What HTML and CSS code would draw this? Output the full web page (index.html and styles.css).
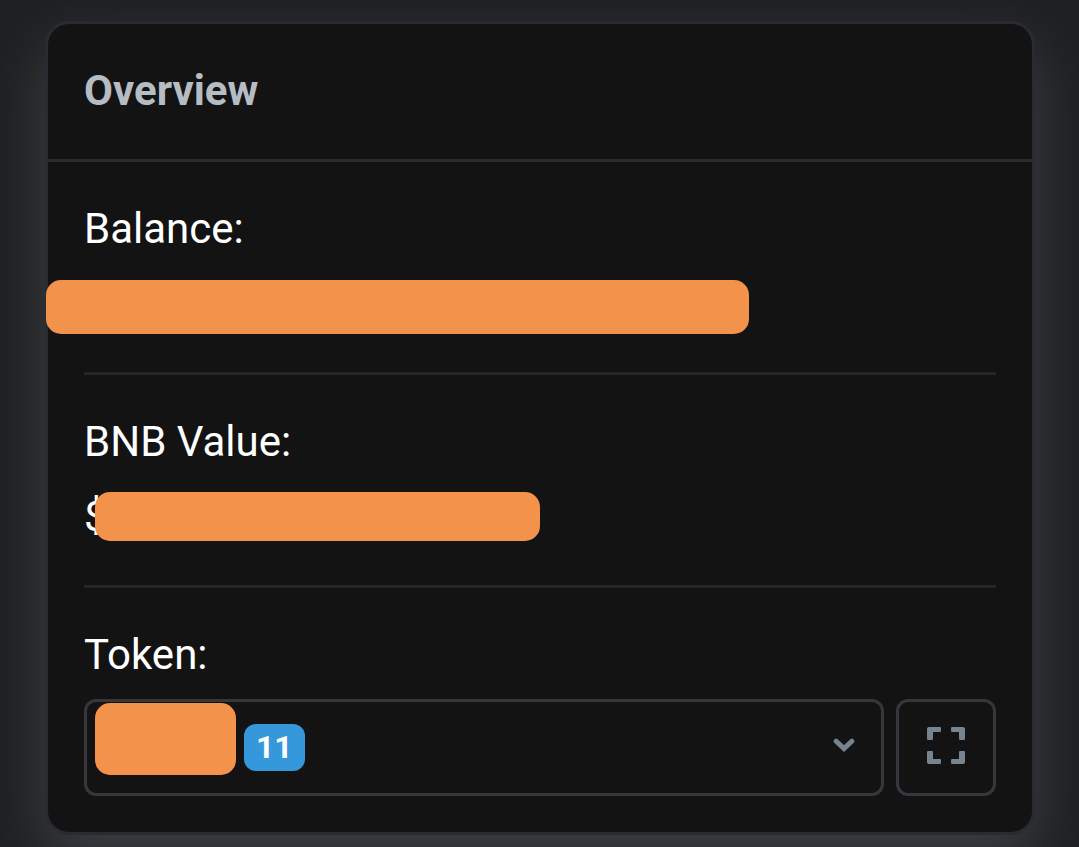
FILE: index.html
```html
<!DOCTYPE html>
<html lang="en">
<head>
    <meta charset="UTF-8">
    <meta name="viewport" content="width=device-width, initial-scale=1.0">
    <title>Overview</title>
    <link rel="stylesheet" href="styles.css">
</head>
<body>
    <main class="card">
        <div class="card-header">
            <h2>Overview</h2>
        </div>

        <div class="card-body">
            <div class="row">
                <div class="label">Balance:</div>
                <div class="value"><span class="mask mask-balance"></span></div>
            </div>
            <hr>
            <div class="row">
                <div class="label">BNB Value:</div>
                <div class="value">$<span class="mask mask-usd"></span></div>
            </div>
            <hr>
            <div class="row">
                <label class="label" for="token">Token:</label>
                <div class="token-bar">
                    <div class="token-select">
                        <select id="token">
                            <option value=""></option>
                        </select>
                        <div class="token-info">
                            <span class="mask-token"></span>
                            <span class="badge">11</span>
                        </div>
                        <svg class="arrow" width="22" height="14" viewBox="0 0 22 14" fill="none" stroke="currentColor" stroke-width="5">
                            <path d="M3.2 3.2 11 10.6 18.8 3.2" stroke-linecap="round"/>
                        </svg>
                    </div>
                    <button type="button" class="expand" aria-label="View tokens">
                        <svg width="38" height="37" viewBox="0 0 38 37" fill="currentColor">
                            <path d="M2 0H13Q14 0 14 1V4Q14 5 13 5H6V12Q6 13 5 13H1Q0 13 0 12V2Q0 0 2 0Z"/>
                            <path d="M36 0H25Q24 0 24 1V4Q24 5 25 5H32V12Q32 13 33 13H37Q38 13 38 12V2Q38 0 36 0Z"/>
                            <path d="M2 37H13Q14 37 14 36V33Q14 32 13 32H6V25Q6 24 5 24H1Q0 24 0 25V35Q0 37 2 37Z"/>
                            <path d="M36 37H25Q24 37 24 36V33Q24 32 25 32H32V25Q32 24 33 24H37Q38 24 38 25V35Q38 37 36 37Z"/>
                        </svg>
                    </button>
                </div>
            </div>
        </div>
    </main>
</body>
</html>
```
FILE: styles.css
```css
*{
    box-sizing: border-box;
}
body{
    margin: 0;
    padding: 21px 44px 12px 45px;
    min-height: 100vh;
    background: #1f2022;
    color: #fff;
    font-family: Roboto, sans-serif;
    font-size: 42px;
    line-height: 61px;
}
.card{
    background: #131313;
    border: 3px solid #282b31;
    border-radius: 24px;
    box-shadow: 0 24px 58px #3e3f43;
}
.card-header{
    padding: 36px 36px 38px;
    border-bottom: 3px solid #2a2c31;
}
h2{
    margin: 0;
    font-size: 42px;
    font-weight: 700;
    color: #b5bcc4;
}
.card-body{
    padding: 36px;
}
hr{
    margin: 36px 0;
    border: none;
    border-top: 3px solid #25262a;
}
.row{
    display: flex;
    flex-direction: column;
    gap: 12px;
}
.label{
    padding-bottom: 2px;
}
.value{
    position: relative;
    height: 63px;
}

/* blocks that hide the private amounts */
.mask{
    position: absolute;
    border-radius: 15px;
    background: #f2924b;
}
.mask-balance{
    top: 7px;
    left: -38px;
    width: 703px;
    height: 54px;
}
.mask-usd{
    top: 6px;
    left: 11px;
    width: 445px;
    height: 49px;
}
.mask-token{
    width: 141px;
    height: 72px;
    border-radius: 15px;
    background: #f2924b;
}

.token-bar{
    display: flex;
    gap: 12px;
    height: 97px;
}
.token-select{
    position: relative;
    flex: 1;
}
select{
    appearance: none;
    display: block;
    width: 100%;
    height: 100%;
    border: 3px solid #35373d;
    border-radius: 12px;
    background: transparent;
    color: #fff;
    font: inherit;
    cursor: pointer;
}
.token-info{
    position: absolute;
    top: 4px;
    left: 11px;
    display: flex;
    align-items: flex-start;
    gap: 8px;
    pointer-events: none;
}
.badge{
    margin-top: 21px;
    padding: 0 12px;
    border-radius: 12px;
    background: #3498db;
    font-size: 32px;
    font-weight: 700;
    line-height: 47px;
}
.arrow{
    position: absolute;
    top: 39px;
    right: 29px;
    color: #77838f;
    pointer-events: none;
}
.expand{
    display: flex;
    align-items: center;
    justify-content: center;
    width: 100px;
    padding: 0 0 4px;
    border: 3px solid #35373d;
    border-radius: 12px;
    background: transparent;
    color: #77838f;
    cursor: pointer;
}
```
